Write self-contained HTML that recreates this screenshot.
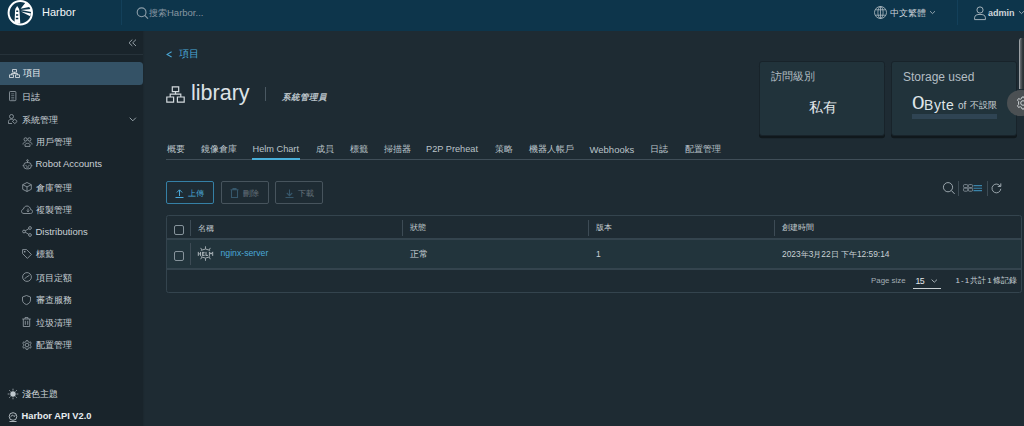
<!DOCTYPE html>
<html><head><meta charset="utf-8">
<style>
*{box-sizing:border-box;margin:0;padding:0}
html,body{width:1024px;height:426px;overflow:hidden;background:#1e2b33;font-family:"Liberation Sans",sans-serif}
.a{position:absolute}
.t{position:absolute;white-space:nowrap;line-height:1}
svg{position:absolute;overflow:visible}
.nav{color:#c9d1d6;font-size:9px}
.navl{color:#c9d1d6;font-size:9.5px}
.ic{fill:none;stroke:#9aa5ac;stroke-width:0.8}
.card{position:absolute;background:#21333b;border:1px solid #18232a;border-radius:3px;box-shadow:0 2.2px 0.6px #10181c}
.tab{color:#bac3c9;font-size:9px}
.tabl{color:#bac3c9;font-size:9.5px}
.btn{position:absolute;top:181px;height:23px;border:1px solid #47545d;border-radius:2px}
.cb{position:absolute;width:10.2px;height:10px;border:1.1px solid #86939b;border-radius:2px}
.th{color:#c3cbd0;font-size:8px;font-weight:500}
.td{color:#c9d1d6;font-size:8.5px}
</style></head><body>
<!-- header -->
<div class="a" style="left:0;top:0;width:1024px;height:31px;background:#0d354b"></div>
<svg style="left:0;top:0" width="40" height="31" viewBox="0 0 40 31">
  <circle cx="20.3" cy="12.8" r="11.7" fill="none" stroke="#fff" stroke-width="2"/>
  <path d="M14.5 23.5 L15.1 10 L15.6 8.4 L17.2 6 L18.8 8.4 L19.4 10 L20.3 23.5 Z" fill="#fff"/>
  <path d="M16.2 10.6h2v1.5h-2z M16 14.2h2.2v1.5h-2.2z M15.8 17.8h2.5v1.5h-2.5z" fill="#0d354b"/>
  <path d="M20.6 8.7 L25.6 2.6 L30.3 6.8 Z M20.8 10.1 L31.2 9.1 L31.4 12 Z M20.8 11.6 L31 13.4 L30.2 16.2 Z" fill="#fff"/>
</svg>
<div class="t" style="left:42px;top:7px;font-size:11px;color:#f5f7f8">Harbor</div>
<div class="a" style="left:120.5px;top:0;width:1.8px;height:25px;background:#13405a"></div>
<svg style="left:136px;top:7px" width="14" height="13" viewBox="0 0 14 13">
  <circle cx="5.6" cy="5.3" r="4.4" fill="none" stroke="#8d9ea9" stroke-width="1.1"/>
  <path d="M8.7 8.4 L12 11.7" stroke="#8d9ea9" stroke-width="1.2"/>
</svg>
<div class="t" style="left:149px;top:8px;font-size:9.5px;color:#8796a1"><span style="font-size:9px">搜索</span>Harbor...</div>
<svg style="left:873px;top:5px" width="15" height="15" viewBox="0 0 15 15">
  <circle cx="7.5" cy="7.5" r="6" fill="none" stroke="#aebac1" stroke-width="0.85"/>
  <ellipse cx="7.5" cy="7.5" rx="2.6" ry="6" fill="none" stroke="#aebac1" stroke-width="0.8"/>
  <path d="M7.5 1.5V13.5M2.3 4.8H12.7M2.3 10.2H12.7" stroke="#aebac1" stroke-width="0.8"/>
</svg>
<div class="t" style="left:890px;top:8.5px;font-size:9px;color:#cdd4d9">中文繁體</div>
<svg style="left:929px;top:10px" width="7" height="5" viewBox="0 0 7 5"><path d="M1 1.2L3.5 3.6L6 1.2" class="ic" style="stroke:#b3bfc7"/></svg>
<div class="a" style="left:956.5px;top:0;width:1.8px;height:25px;background:#13405a"></div>
<svg style="left:973px;top:6px" width="15" height="15" viewBox="0 0 15 15">
  <circle cx="7" cy="4" r="3.1" fill="none" stroke="#b3bec5" stroke-width="0.9"/>
  <path d="M1.6 13.6 V11.6 C1.6 9.3 4 8.4 7 8.4 C10 8.4 12.4 9.3 12.4 11.6 V13.6 Z" fill="none" stroke="#b3bec5" stroke-width="0.9"/>
</svg>
<div class="t" style="left:988px;top:9px;font-size:9px;font-weight:bold;color:#cdd4d9">admin</div>
<svg style="left:1018px;top:10px" width="7" height="5" viewBox="0 0 7 5"><path d="M1 1.2L3.5 3.6L6 1.2" class="ic" style="stroke:#b3bfc7"/></svg>

<!-- sidebar -->
<div class="a" style="left:0;top:31px;width:143px;height:395px;background:#19242b"></div>
<svg style="left:128px;top:39px" width="9" height="8" viewBox="0 0 9 8"><path d="M4.3 0.6L1 3.8L4.3 7M8 0.6L4.7 3.8L8 7" class="ic" style="stroke:#b0bbc2"/></svg>
<div class="a" style="left:0;top:54px;width:143px;height:1px;background:#26323a"></div>
<div class="a" style="left:0;top:62px;width:143px;height:23px;background:#345266;border-radius:0 3.5px 3.5px 0"></div>

<svg style="left:9px;top:69px" width="11" height="9" viewBox="0 0 11 9"><path d="M3.5 0.5H7.5V3.2H3.5Z M0.5 5.8H4.5V8.5H0.5Z M6.5 5.8H10.5V8.5H6.5Z M5.5 3.2V4.5 M2.5 5.8V4.5H8.5V5.8" class="ic" style="stroke:#e3e8eb"/></svg>
<div class="t nav" style="left:23px;top:68.5px;font-weight:500;color:#eef1f3">項目</div>

<svg style="left:9px;top:91px" width="8" height="10" viewBox="0 0 8 10"><rect x="0.5" y="0.5" width="6.4" height="9.2" rx="0.8" class="ic"/><path d="M2.2 2.8H5.2 M2.2 4.6H5.2 M2.2 6.4H5.2 M2.2 8H5.2" stroke="#6f7b83" stroke-width="0.8"/></svg>
<div class="t nav" style="left:22px;top:92.5px">日誌</div>

<svg style="left:7.5px;top:113.5px" width="10" height="10" viewBox="0 0 10 10"><circle cx="3.5" cy="2.5" r="2" class="ic"/><path d="M0.5 9.5V7.5C0.5 6 2 5.3 3.5 5.3C4.3 5.3 5 5.4 5.5 5.7 M6.8 5.2L9.2 7.4L6.8 9.6L4.4 7.4Z M0.5 9.5H4" class="ic"/></svg>
<div class="t nav" style="left:22px;top:115.5px">系統管理</div>
<svg style="left:128.5px;top:116.5px" width="8" height="5" viewBox="0 0 8 5"><path d="M0.7 0.7L3.8 3.8L6.9 0.7" class="ic" style="stroke:#b5c0c7"/></svg>

<svg style="left:21.5px;top:137px" width="11" height="10" viewBox="0 0 11 10"><circle cx="3.6" cy="2.4" r="1.6" class="ic"/><circle cx="7.4" cy="2.4" r="1.6" class="ic"/><path d="M1 7.5C1 5.8 2.2 5 3.6 5 M10 7.5C10 5.8 8.8 5 7.4 5 M3 9.4V8C3 6.9 4.1 6.3 5.5 6.3C6.9 6.3 8 6.9 8 8V9.4Z" class="ic"/></svg>
<div class="t nav" style="left:35.5px;top:137.5px">用戶管理</div>

<svg style="left:21.5px;top:158.5px" width="11" height="11" viewBox="0 0 11 11"><rect x="1.8" y="3.6" width="7.4" height="6.2" rx="2.6" class="ic"/><path d="M5.5 3.6V2.2 M1.8 6.7H0.6 M9.2 6.7H10.4 M4 8H7" class="ic"/><circle cx="5.5" cy="1.5" r="0.8" class="ic"/><circle cx="4" cy="6.2" r="0.55" fill="#a3aeb5"/><circle cx="7" cy="6.2" r="0.55" fill="#a3aeb5"/></svg>
<div class="t navl" style="left:35.5px;top:159px">Robot Accounts</div>

<svg style="left:21.5px;top:182px" width="10" height="10" viewBox="0 0 10 10"><path d="M5 0.5L9.3 2.7V7.3L5 9.5L0.7 7.3V2.7Z M0.7 2.7L5 4.9L9.3 2.7 M5 4.9V9.5" class="ic"/></svg>
<div class="t nav" style="left:35.5px;top:183.5px">倉庫管理</div>

<svg style="left:20.5px;top:204.5px" width="12" height="10" viewBox="0 0 12 10"><path d="M3 8.5H9.5C10.8 8.5 11.5 7.6 11.5 6.5C11.5 5.3 10.6 4.6 9.6 4.6C9.4 2.5 7.9 1 6 1C4.1 1 2.8 2.3 2.5 4C1.4 4.3 0.5 5.2 0.5 6.5C0.5 7.6 1.4 8.5 3 8.5Z M7 3.5V6.8 M5.8 5.6L7 6.8L8.2 5.6" class="ic"/></svg>
<div class="t nav" style="left:35.5px;top:205.7px">複製管理</div>

<svg style="left:21.5px;top:226px" width="10" height="11" viewBox="0 0 10 11"><circle cx="8" cy="2" r="1.4" class="ic"/><circle cx="2" cy="5.5" r="1.4" class="ic"/><circle cx="8" cy="9" r="1.4" class="ic"/><path d="M3.2 4.8L6.8 2.7 M3.2 6.2L6.8 8.3" class="ic"/></svg>
<div class="t navl" style="left:35.5px;top:227px">Distributions</div>

<svg style="left:21.5px;top:249px" width="10" height="10" viewBox="0 0 10 10"><path d="M0.6 0.6H4.6L9.4 5.4L5.4 9.4L0.6 4.6Z" class="ic"/><circle cx="2.8" cy="2.8" r="0.7" fill="#b7c1c8"/></svg>
<div class="t nav" style="left:35.5px;top:250px">標籤</div>

<svg style="left:21.5px;top:272px" width="10" height="10" viewBox="0 0 10 10"><circle cx="5" cy="5" r="4.4" class="ic"/><path d="M2.5 6.8L4.5 5.2L7.5 3.2" class="ic"/></svg>
<div class="t nav" style="left:35.5px;top:273.5px">項目定額</div>

<svg style="left:22px;top:294.5px" width="9" height="10" viewBox="0 0 9 10"><path d="M4.5 0.5L8.5 2V5C8.5 7.3 6.8 8.8 4.5 9.6C2.2 8.8 0.5 7.3 0.5 5V2Z" class="ic"/></svg>
<div class="t nav" style="left:35.5px;top:295.7px">審查服務</div>

<svg style="left:22px;top:317px" width="9" height="10" viewBox="0 0 9 10"><path d="M0.3 2H8.7 M3 2V0.6H6V2 M1.3 2V9.5H7.7V2 M3.3 3.8V7.8 M5.7 3.8V7.8" class="ic"/></svg>
<div class="t nav" style="left:35.5px;top:318.5px">垃圾清理</div>

<svg style="left:21.5px;top:339.5px" width="10" height="10" viewBox="0 0 10 10"><circle cx="5" cy="5" r="1.8" class="ic"/><path d="M4.2 0.6H5.8L6.1 1.8L7.3 2.4L8.4 1.8L9.2 3.2L8.3 4.1V5.9L9.2 6.8L8.4 8.2L7.3 7.6L6.1 8.2L5.8 9.4H4.2L3.9 8.2L2.7 7.6L1.6 8.2L0.8 6.8L1.7 5.9V4.1L0.8 3.2L1.6 1.8L2.7 2.4L3.9 1.8Z" class="ic"/></svg>
<div class="t nav" style="left:35.5px;top:341px">配置管理</div>

<svg style="left:7.5px;top:389px" width="10" height="10" viewBox="0 0 10 10"><circle cx="5" cy="5" r="2.7" fill="#bfc8ce"/><path d="M5 -0.3V1.5M5 8.5V10.3M-0.3 5H1.5M8.5 5H10.3M1.2 1.2L2.5 2.5M7.5 7.5L8.8 8.8M8.8 1.2L7.5 2.5M1.2 8.8L2.5 7.5" stroke="#aab4ba" stroke-width="0.8"/></svg>
<div class="t nav" style="left:21.5px;top:390px;font-weight:500;color:#d3dade">淺色主題</div>

<svg style="left:7.5px;top:412px" width="10" height="10" viewBox="0 0 10 10"><circle cx="5" cy="4.5" r="3.8" class="ic" style="stroke:#cfd7dc"/><path d="M2.5 4.8L4.5 3L6 4.5L7.5 3.2 M1.5 9.5H8.5" class="ic" style="stroke:#cfd7dc"/></svg>
<div class="t" style="left:21.5px;top:412px;font-size:9.3px;font-weight:bold;color:#e8edf0">Harbor API V2.0</div>

<!-- main background -->
<div class="a" style="left:143px;top:31px;width:881px;height:395px;background:#1e2b33"></div>
<div class="a" style="left:143px;top:31px;width:2px;height:395px;background:linear-gradient(90deg,rgba(0,0,0,0.10),rgba(0,0,0,0))"></div>

<!-- breadcrumb -->
<svg style="left:165.5px;top:50.5px" width="7" height="7" viewBox="0 0 7 7"><path d="M5.6 0.8L1.1 3.4L5.6 6" fill="none" stroke="#4aa8d8" stroke-width="1.05"/></svg>
<div class="t" style="left:178.5px;top:48.5px;font-size:10px;color:#4aa8d8">項目</div>

<!-- title -->
<svg style="left:166px;top:86px" width="19" height="17" viewBox="0 0 19 17"><path d="M6.3 0.8H12.7V5.6H6.3Z M0.8 11H7.6V16.2H0.8Z M11.4 11H18.2V16.2H11.4Z M9.5 5.6V8.2 M4.2 11V8.2H14.8V11" fill="none" stroke="#d3dade" stroke-width="1.2"/></svg>
<div class="t" style="left:191px;top:83px;font-size:21.5px;color:#dce2e6">library</div>
<div class="a" style="left:265px;top:87px;width:1px;height:14px;background:#4a5862"></div>
<div class="t" style="left:282px;top:92.5px;font-size:8.5px;font-style:italic;font-weight:bold;color:#b9c2c8">系統管理員</div>

<!-- cards -->
<div class="card" style="left:758.8px;top:61.3px;width:125.8px;height:75.2px"></div>
<div class="t" style="left:771px;top:71px;font-size:11px;color:#b3bdc3">訪問級別</div>
<div class="t" style="left:808.5px;top:100px;font-size:14px;color:#e3e8eb">私有</div>

<div class="card" style="left:890.8px;top:61.3px;width:125.8px;height:75.2px"></div>
<div class="t" style="left:903px;top:71px;font-size:12px;color:#b3bdc3">Storage used</div>
<div class="t" style="left:911.5px;top:94px;font-size:18.5px;color:#dfe5e8;display:inline-block;transform:scaleX(1.22);transform-origin:0 0">0</div>
<div class="t" style="left:924px;top:97.5px;font-size:14px;letter-spacing:0.55px;color:#dfe5e8">Byte</div>
<div class="t" style="left:958px;top:101px;font-size:10px;color:#c8d0d5">of</div>
<div class="t" style="left:969.5px;top:101px;font-size:9px;color:#c8d0d5">不設限</div>
<div class="a" style="left:911.5px;top:114.2px;width:85.5px;height:4.6px;background:#2f4453"></div>

<!-- scrollbar + gear -->
<div class="a" style="left:1018.5px;top:37.5px;width:8px;height:51px;border-left:1.6px solid #9ca1a5;border-radius:3px 0 0 0;background:linear-gradient(90deg,#6b7074,#2c3337 40%,#262d31)"></div>
<div class="a" style="left:1007px;top:89.5px;width:28px;height:26px;border-radius:13px;background:#4b5053"></div>
<svg style="left:1016px;top:96px" width="14" height="14" viewBox="0 0 14 14"><circle cx="7" cy="7" r="2.3" fill="none" stroke="#cdd2d5" stroke-width="1"/><path d="M6 1H8L8.4 2.6L9.9 3.3L11.4 2.5L12.5 4.2L11.4 5.4V8.6L12.5 9.8L11.4 11.5L9.9 10.7L8.4 11.4L8 13H6L5.6 11.4L4.1 10.7L2.6 11.5L1.5 9.8L2.6 8.6V5.4L1.5 4.2L2.6 2.5L4.1 3.3L5.6 2.6Z" fill="none" stroke="#cdd2d5" stroke-width="1"/></svg>

<!-- tabs -->
<div class="t tab" style="left:167px;top:145px">概要</div>
<div class="t tab" style="left:201px;top:145px">鏡像倉庫</div>
<div class="t tabl" style="left:252.5px;top:144.5px;font-size:9.2px">Helm Chart</div>
<div class="t tab" style="left:316px;top:145px">成員</div>
<div class="t tab" style="left:350px;top:145px">標籤</div>
<div class="t tab" style="left:384px;top:145px">掃描器</div>
<div class="t tabl" style="left:426px;top:144.5px;font-size:9.2px">P2P Preheat</div>
<div class="t tab" style="left:495px;top:145px">策略</div>
<div class="t tab" style="left:529px;top:145px">機器人帳戶</div>
<div class="t tabl" style="left:589.5px;top:144.5px">Webhooks</div>
<div class="t tab" style="left:650px;top:145px">日誌</div>
<div class="t tab" style="left:685px;top:145px">配置管理</div>
<div class="a" style="left:166px;top:158.5px;width:858px;height:1px;background:#404e58"></div>
<div class="a" style="left:251.5px;top:157.5px;width:48px;height:2px;background:#49afd9"></div>

<!-- buttons -->
<div class="btn" style="left:166px;width:48px;border-color:#3580a6"></div>
<svg style="left:175px;top:188.5px" width="9" height="9" viewBox="0 0 9 9"><path d="M4.5 7V1 M1.8 3.5L4.5 0.8L7.2 3.5 M0.5 8.5H8.5" fill="none" stroke="#4aa8d8" stroke-width="1"/></svg>
<div class="t" style="left:188px;top:189.5px;font-size:8px;color:#4aa8d8">上傳</div>
<div class="btn" style="left:220.5px;width:48px"></div>
<svg style="left:229.5px;top:188px" width="9" height="10" viewBox="0 0 9 10"><path d="M0.5 1.8H8.5 M3 1.8V0.6H6V1.8 M1.5 1.8V9.5H7.5V1.8" fill="none" stroke="#36576b" stroke-width="1.1"/></svg>
<div class="t" style="left:242.5px;top:189.5px;font-size:8px;color:#66737c">刪除</div>
<div class="btn" style="left:275px;width:48px"></div>
<svg style="left:284.5px;top:188.5px" width="9" height="9" viewBox="0 0 9 9"><path d="M4.5 0.5V6.5 M1.8 4L4.5 6.7L7.2 4 M0.5 8.5H8.5" fill="none" stroke="#36576b" stroke-width="1.1"/></svg>
<div class="t" style="left:297.5px;top:189.5px;font-size:8px;color:#66737c">下載</div>

<!-- toolbar icons -->
<svg style="left:942px;top:181px" width="14" height="14" viewBox="0 0 14 14"><circle cx="6" cy="6.2" r="4.6" fill="none" stroke="#a5b0b7" stroke-width="0.9"/><path d="M9.3 9.5L12.6 12.9" stroke="#a5b0b7" stroke-width="1"/></svg>
<div class="a" style="left:958px;top:181px;width:1px;height:15px;background:#3e4c55"></div>
<svg style="left:963px;top:184px" width="20" height="8" viewBox="0 0 20 8"><rect x="0.5" y="0.6" width="4.3" height="3" rx="1" fill="none" stroke="#838f97" stroke-width="0.9"/><rect x="5.3" y="0.6" width="4.3" height="3" rx="1" fill="none" stroke="#838f97" stroke-width="0.9"/><rect x="0.5" y="4.2" width="4.3" height="3" rx="1" fill="none" stroke="#838f97" stroke-width="0.9"/><rect x="5.3" y="4.2" width="4.3" height="3" rx="1" fill="none" stroke="#838f97" stroke-width="0.9"/><path d="M10.5 1.6H19M10.5 4.3H19M10.5 6.6H19" stroke="#3a84aa" stroke-width="1.05"/></svg>
<div class="a" style="left:986.7px;top:181px;width:1px;height:15px;background:#3e4c55"></div>
<svg style="left:991px;top:183px" width="11" height="10" viewBox="0 0 11 10"><path d="M9.2 3.2A4.4 4.4 0 1 0 9.8 5.8" fill="none" stroke="#a5b0b7" stroke-width="0.9"/><path d="M6.8 3.4H9.8V0.4" fill="none" stroke="#a5b0b7" stroke-width="1"/></svg>

<!-- datagrid -->
<div class="a" style="left:166px;top:215px;width:856px;height:78px;border:1.5px solid #34444e;border-radius:2.5px"></div>
<div class="a" style="left:167px;top:238px;width:854px;height:2px;background:#34444e"></div>
<div class="a" style="left:167px;top:240px;width:854px;height:28px;background:#22343c"></div>
<div class="a" style="left:167px;top:268px;width:854px;height:2px;background:#34444e"></div>
<div class="cb" style="left:174px;top:225px"></div>
<div class="a" style="left:190.2px;top:220px;width:1px;height:15.5px;background:#3d4b55"></div>
<div class="t th" style="left:198px;top:224.5px">名稱</div>
<div class="a" style="left:402px;top:220px;width:1px;height:15.5px;background:#3d4b55"></div>
<div class="t th" style="left:410px;top:223.5px">狀態</div>
<div class="a" style="left:588px;top:220px;width:1px;height:15.5px;background:#3d4b55"></div>
<div class="t th" style="left:596px;top:224px">版本</div>
<div class="a" style="left:773.5px;top:220px;width:1px;height:15.5px;background:#3d4b55"></div>
<div class="t th" style="left:782px;top:224px">創建時間</div>

<div class="cb" style="left:174px;top:251px"></div>
<div class="a" style="left:190.2px;top:242.5px;width:1px;height:22.5px;background:#3d4b55"></div>
<svg style="left:194px;top:243px" width="24" height="20" viewBox="0 0 24 20">
  <path d="M6.9 7.4Q11.5 4.6 16.1 7.4 M6.9 13.7Q11.5 16.5 16.1 13.7 M7.7 6.8L6.7 4.9 M11.5 5.9L11.5 3.3 M15.3 6.8L16.3 4.9 M7.7 14.3L6.7 16.2 M11.5 15.2L11.5 17.8 M15.3 14.3L16.3 16.2" fill="none" stroke="#a4adb2" stroke-width="0.95"/>
  <path d="M4.3 8.9V12.9 M6.5 8.9V12.9 M4.3 10.9H6.5 M8.4 8.9V12.9 M8.4 9.4H10.6 M8.4 10.9H10.3 M8.4 12.4H10.6 M12 8.9V12.9 M12 12.4H14 M15.4 12.9V8.9L17.05 11.2L18.7 8.9V12.9" fill="none" stroke="#a9b2b7" stroke-width="1"/>
</svg>
<div class="t" style="left:220.5px;top:249px;font-size:8.7px;color:#4aa8d8">nginx-server</div>
<div class="t td" style="left:410px;top:250px;font-size:9px">正常</div>
<div class="t td" style="left:596px;top:250px;font-size:8.5px">1</div>
<div class="t td" style="left:782px;top:249.5px;font-size:8.4px">2023<span style="font-size:8px">年</span>3<span style="font-size:8px">月</span>22<span style="font-size:8px">日 下午</span>12:59:14</div>

<div class="t" style="left:871px;top:277px;font-size:7.9px;color:#a4aeb5">Page size</div>
<div class="t" style="left:915.5px;top:277px;font-size:8.8px;letter-spacing:-0.6px;color:#e2e7ea">15</div>
<svg style="left:930.5px;top:278.5px" width="7" height="4" viewBox="0 0 7 4"><path d="M0.6 0.6L3.3 3.2L6 0.6" fill="none" stroke="#b6c0c6" stroke-width="0.9"/></svg>
<div class="a" style="left:912.5px;top:288px;width:28px;height:1.2px;background:#c9d0d4"></div>
<div class="t" style="left:955.5px;top:277px;font-size:8px;color:#c9d1d6;word-spacing:-1.2px">1 - 1 <span style="font-size:8px">共計</span> 1 <span style="font-size:8px">條記錄</span></div>
</body></html>
